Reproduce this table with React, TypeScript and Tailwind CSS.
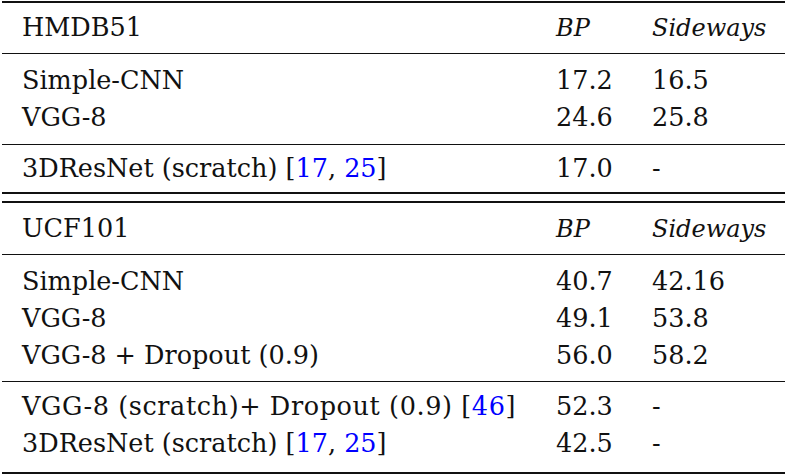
import React from 'react';

type Row = { name: React.ReactNode; bp: string; sw: string };

const Cite = ({ n }: { n: string }) => <span className="text-[#0000ff]">{n}</span>;

function Line({ className }: { className: string }) {
  return <div className={`bg-[#111] ${className}`} />;
}

function DataRow({ row }: { row: Row }) {
  return (
    <div className="grid grid-cols-[534px_96px_1fr] pl-[20px] h-[37px] items-center">
      <div>{row.name}</div>
      <div>{row.bp}</div>
      <div>{row.sw}</div>
    </div>
  );
}

function Header({ title, h }: { title: string; h: string }) {
  return (
    <div className={`grid grid-cols-[534px_96px_1fr] pl-[20px] items-center ${h}`}>
      <div>{title}</div>
      <div className="italic text-[24px]">BP</div>
      <div className="italic text-[24px]">Sideways</div>
    </div>
  );
}

const hmdbA: Row[] = [
  { name: 'Simple-CNN', bp: '17.2', sw: '16.5' },
  { name: 'VGG-8', bp: '24.6', sw: '25.8' },
];
const hmdbB: Row[] = [
  {
    name: (
      <>
        3DResNet (scratch) [<Cite n="17" />, <Cite n="25" />]
      </>
    ),
    bp: '17.0',
    sw: '-',
  },
];
const ucfA: Row[] = [
  { name: 'Simple-CNN', bp: '40.7', sw: '42.16' },
  { name: 'VGG-8', bp: '49.1', sw: '53.8' },
  { name: 'VGG-8 + Dropout (0.9)', bp: '56.0', sw: '58.2' },
];
const ucfB: Row[] = [
  {
    name: (
      <span className="tracking-[0.6px]">
        VGG-8 (scratch)+ Dropout (0.9) [<Cite n="46" />]
      </span>
    ),
    bp: '52.3',
    sw: '-',
  },
  {
    name: (
      <>
        3DResNet (scratch) [<Cite n="17" />, <Cite n="25" />]
      </>
    ),
    bp: '42.5',
    sw: '-',
  },
];

export default function App() {
  return (
    <div className="w-[790px] h-[475px] bg-white text-[#111] text-[25.5px] leading-none font-['DejaVu_Serif',serif] overflow-hidden">
      <div className="ml-[2px] w-[783px] flex flex-col">
        <div className="h-[1px]" />
        <Line className="h-[2px]" />
        <Header title="HMDB51" h="h-[50px]" />
        <Line className="h-[1px]" />
        <div className="pt-[8px] pb-[8px]">
          {hmdbA.map((r, i) => (
            <DataRow key={i} row={r} />
          ))}
        </div>
        <Line className="h-[1px]" />
        <div className="pt-[5px] pb-[5px]">
          {hmdbB.map((r, i) => (
            <DataRow key={i} row={r} />
          ))}
        </div>
        <Line className="h-[2px]" />
        <div className="h-[7px]" />
        <Line className="h-[2px]" />
        <Header title="UCF101" h="h-[51px]" />
        <Line className="h-[1px]" />
        <div className="pt-[8px] pb-[7px]">
          {ucfA.map((r, i) => (
            <DataRow key={i} row={r} />
          ))}
        </div>
        <Line className="h-[1px]" />
        <div className="pt-[6px] pb-[10px]">
          {ucfB.map((r, i) => (
            <DataRow key={i} row={r} />
          ))}
        </div>
        <Line className="h-[2px]" />
      </div>
    </div>
  );
}
